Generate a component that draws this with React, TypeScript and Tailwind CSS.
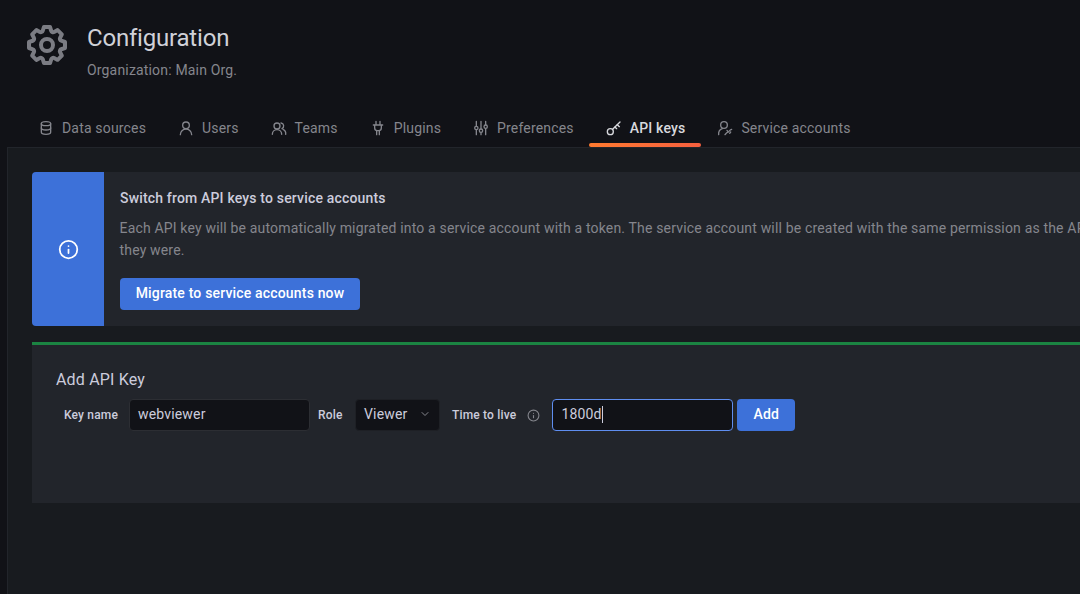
import { Info, ChevronDown } from "lucide-react";

function Svg({ children, className }: { children: React.ReactNode; className?: string }) {
  return (
    <svg viewBox="0 0 24 24" fill="none" stroke="currentColor" strokeWidth={2} strokeLinecap="round" strokeLinejoin="round" className={"w-4 h-4 shrink-0 " + (className ?? "")}>
      {children}
    </svg>
  );
}

const DatabaseIcon = () => (
  <Svg>
    <path d="M5 5.5C5 3.5 8 2.5 12 2.5s7 1 7 3v13c0 2-3 3-7 3s-7-1-7-3z" />
    <path d="M5 5.5c0 2 3 3 7 3s7-1 7-3" />
    <path d="M5 12c0 2 3 3 7 3s7-1 7-3" />
  </Svg>
);

const UserIcon = () => (
  <Svg>
    <circle cx="12" cy="8" r="5" />
    <path d="M3.5 22a8.5 8.5 0 0 1 17 0" />
  </Svg>
);

const TeamsIcon = () => (
  <Svg>
    <circle cx="9" cy="9" r="4.5" />
    <path d="M2 21.5a7 7 0 0 1 14 0" />
    <path d="M15 4.5a4.5 4.5 0 0 1 1.5 8.5" />
    <path d="M18 14a7 7 0 0 1 4 7.5" />
  </Svg>
);

const PlugIcon = () => (
  <Svg>
    <path d="M9 2v5M15 2v5M5 7.5h14" />
    <path d="M7 8v4a4 4 0 0 0 4 4h2a4 4 0 0 0 4-4V8" />
    <path d="M10 16v6M14 16v6" />
  </Svg>
);

const SlidersIcon = () => (
  <Svg>
    <path d="M5 2v7M5 15v7M12 2v11M12 19v3M19 2v5M19 13v9" />
    <circle cx="5" cy="12" r="2.5" />
    <circle cx="12" cy="16" r="2.5" />
    <circle cx="19" cy="10" r="2.5" />
  </Svg>
);

const KeyIcon = () => (
  <Svg>
    <circle cx="6.5" cy="17.5" r="4.5" />
    <path d="M10 14L21 3" />
    <path d="M17 7l3 3M13.5 10.5l2.5 2.5" />
  </Svg>
);

const ServiceIcon = () => (
  <Svg>
    <circle cx="10.5" cy="7.5" r="5" />
    <path d="M2.5 22a8.5 8.5 0 0 1 5.5-9" />
    <path d="M12 22c1.5-1 1.5-2.5 3-3s2.5-1 3.5-2.5 2-2 3.5-2.5" />
    <path d="M15 15.5l1.5 2M19 20l1.5-2" />
  </Svg>
);

const tabs = [
  { label: "Data sources", icon: DatabaseIcon },
  { label: "Users", icon: UserIcon },
  { label: "Teams", icon: TeamsIcon },
  { label: "Plugins", icon: PlugIcon },
  { label: "Preferences", icon: SlidersIcon },
  { label: "API keys", icon: KeyIcon, active: true },
  { label: "Service accounts", icon: ServiceIcon },
];

function Cog() {
  return (
    <svg viewBox="0 0 24 24" className="w-12 h-12 shrink-0 fill-[#7b7c83]">
      <path d="M21.32,9.55l-1.89-.63.89-1.78A1,1,0,0,0,20.13,6L18,3.87a1,1,0,0,0-1.15-.19l-1.78.89-.63-1.89A1,1,0,0,0,13.5,2h-3a1,1,0,0,0-.95.68L8.92,4.57,7.14,3.68A1,1,0,0,0,6,3.87L3.87,6a1,1,0,0,0-.19,1.15l.89,1.78-1.89.63A1,1,0,0,0,2,10.5v3a1,1,0,0,0,.68.95l1.89.63-.89,1.78A1,1,0,0,0,3.87,18L6,20.13a1,1,0,0,0,1.15.19l1.78-.89.63,1.89a1,1,0,0,0,.95.68h3a1,1,0,0,0,.95-.68l.63-1.89,1.78.89A1,1,0,0,0,18,20.13L20.13,18a1,1,0,0,0,.19-1.15l-.89-1.78,1.89-.63A1,1,0,0,0,22,13.5v-3A1,1,0,0,0,21.32,9.55ZM20,12.78l-1.2.4A2,2,0,0,0,17.64,16l.57,1.14-1.1,1.1L16,17.64a2,2,0,0,0-2.79,1.16l-.4,1.2H11.22l-.4-1.2A2,2,0,0,0,8,17.64l-1.14.57-1.1-1.1L6.36,16A2,2,0,0,0,5.2,13.21L4,12.78V11.22l1.2-.4A2,2,0,0,0,6.36,8L5.79,6.89l1.1-1.1L8,6.36A2,2,0,0,0,10.79,5.2l.4-1.2h1.56l.4,1.2A2,2,0,0,0,16,6.36l1.14-.57,1.1,1.1L17.64,8a2,2,0,0,0,1.16,2.79l1.2.4ZM12,8a4,4,0,1,0,4,4A4,4,0,0,0,12,8Zm0,6a2,2,0,1,1,2-2A2,2,0,0,1,12,14Z" />
    </svg>
  );
}

export default function App() {
  return (
    <div className="w-[1080px] h-[594px] overflow-hidden bg-[#111217] font-['Roboto',sans-serif] tracking-[0.01071em] flex flex-col">
      <header className="h-[147px] shrink-0 flex flex-col">
        <div className="flex pl-[23px] pt-[21px] gap-4">
          <Cog />
          <div className="flex flex-col">
            <h1 className="text-[24px] leading-[34px] tracking-[-0.00833em] text-[#d0d1d8]">Configuration</h1>
            <div className="text-sm leading-5 text-[#85868d] mt-[5px]">Organization: Main Org.</div>
          </div>
        </div>
        <nav className="flex pl-[22px] mt-auto h-[40px]">
          {tabs.map((t) => (
            <a
              key={t.label}
              className={
                "relative flex items-center gap-2 px-4 pt-px text-sm " +
                (t.active ? "font-medium text-[#d8d9de]" : "text-[#85868d]")
              }
            >
              <t.icon />
              {t.label}
              {t.active && (
                <span className="absolute left-[-1px] right-0 bottom-0 h-1 rounded-sm bg-gradient-to-r from-[#ff7a2f] to-[#f55f3e]" />
              )}
            </a>
          ))}
        </nav>
      </header>
      <main className="flex-1 ml-[7px] border-l border-t border-[#22252b] bg-[#181b1f] pl-6 pt-6">
        <section className="w-[1300px] h-[154px] flex bg-[#22252b] rounded-sm overflow-hidden">
          <div className="w-[72px] shrink-0 bg-[#3d71d9] flex items-center justify-center">
            <Info size={21} strokeWidth={2} className="text-white" />
          </div>
          <div className="pl-4 pt-4">
            <div className="text-sm leading-5 font-medium text-[#ccccdc]">Switch from API keys to service accounts</div>
            <p className="mt-[9px] ml-[-0.5px] text-sm leading-[22px] text-[#85868d] whitespace-nowrap">
              Each API key will be automatically migrated into a service account with a token. The service account will be created with the same permission as the API Key and current API Keys will continue to work as
              <br />
              they were.
            </p>
            <button className="mt-[17px] h-8 w-[240px] pb-[2px] rounded-sm bg-[#3d71d9] text-sm font-medium text-white">
              Migrate to service accounts now
            </button>
          </div>
        </section>
        <section className="mt-4 w-[1300px] h-[161px] bg-[#22252b] border-t-[3px] border-[#1b8442] pl-6 pt-6">
          <h2 className="text-base leading-[22px] text-[#ccccdc]">Add API Key</h2>
          <div className="flex items-center mt-[8px] h-8">
            <label className="pl-2 w-[73px] text-xs font-medium text-[#ccccdc]">Key name</label>
            <div className="w-[181px] h-8 flex items-center px-2 pb-[2px] bg-[#111217] border border-[#2c2e33] rounded-sm text-sm text-[#ccccdc]">webviewer</div>
            <label className="ml-2 w-[37px] text-xs font-medium text-[#ccccdc]">Role</label>
            <div className="w-[85px] h-8 flex items-center justify-between px-2 pb-[2px] bg-[#111217] border border-[#1e2025] rounded-sm text-sm text-[#ccccdc]">
              Viewer
              <ChevronDown size={12} className="text-[#85868d]" />
            </div>
            <label className="ml-3 text-xs font-medium text-[#ccccdc]">Time to live</label>
            <Info size={13} className="ml-[11px] mr-[12px] text-[#85868d]" />
            <div className="w-[181px] h-8 flex items-center px-2 pb-[2px] bg-[#111217] border border-[#5f8ef0] rounded-sm text-sm text-[#ccccdc]">
              1800d<span className="w-px h-[17px] bg-[#ccccdc]" />
            </div>
            <button className="ml-1 h-8 w-[58px] pb-[2px] rounded-sm bg-[#3d71d9] text-sm font-medium text-white">Add</button>
          </div>
        </section>
      </main>
    </div>
  );
}
